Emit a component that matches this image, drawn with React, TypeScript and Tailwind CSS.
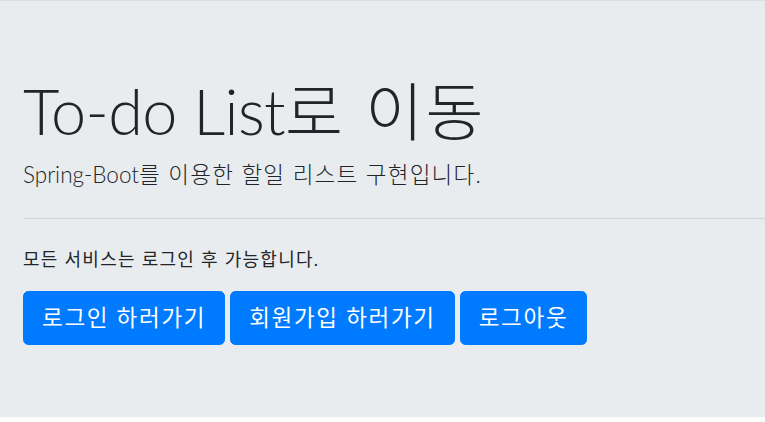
export default function App() {
  const btn =
    "inline-block rounded-[5.4px] border border-[#007bff] bg-[#007bff] px-[18px] py-[9px] text-[22.5px] leading-[1.5] font-normal tracking-[0.075em] text-white";
  return (
    <div
      className="min-h-[422px] w-full bg-white text-[#212529]"
      style={{ fontFamily: '"Lato", "Noto Sans CJK KR", sans-serif' }}
    >
      <div className="h-px w-full bg-[#dcdfe2]" />
      <div className="overflow-hidden bg-[#e9ecef] pt-[72px] pb-[72px] pl-[23px]">
        <h1 className="m-0 text-[63px] leading-[1.2] font-light">
          <span className="tracking-[-0.01em]">To-do List</span>
          <span className="tracking-[0.04em]">로 이동</span>
        </h1>
        <p className="mt-[9px] text-[22.5px] leading-[1.5] font-light">
          Spring-Boot<span className="tracking-[0.055em]">를 이용한 할일 리스트 구현입니다.</span>
        </p>
        <hr className="mt-[27px] mb-[27px] border-0 border-t border-t-[#d2d5d8]" />
        <p className="text-[18px] leading-[1.5] font-normal tracking-[0.07em]">
          모든 서비스는 로그인 후 가능합니다.
        </p>
        <div className="mt-[18px] flex gap-[5px]">
          <a className={btn}>로그인 하러가기</a>
          <a className={btn}>회원가입 하러가기</a>
          <a className={btn}>로그아웃</a>
        </div>
      </div>
    </div>
  );
}
